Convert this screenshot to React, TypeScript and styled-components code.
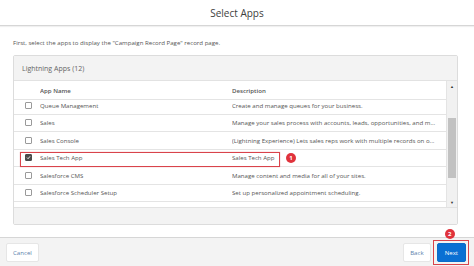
import React from 'react';
import styled, {createGlobalStyle} from 'styled-components';

const GlobalStyle = createGlobalStyle`
  html, body {
    margin: 0;
    padding: 0;
    background: #ffffff;
  }
  body {
    font-family: 'Open Sans', 'Liberation Sans', sans-serif;
    color: #3e3e3c;
  }
`;

type AppRow = {name: string; description: string; checked?: boolean; marked?: boolean};

const apps: AppRow[] = [
  {name: 'Queue Management', description: 'Create and manage queues for your business.'},
  {name: 'Sales', description: 'Manage your sales process with accounts, leads, opportunities, and m...'},
  {name: 'Sales Console', description: '(Lightning Experience) Lets sales reps work with multiple records on o...'},
  {name: 'Sales Tech App', description: 'Sales Tech App', checked: true, marked: true},
  {name: 'Salesforce CMS', description: 'Manage content and media for all of your sites.'},
  {name: 'Salesforce Scheduler Setup', description: 'Set up personalized appointment scheduling.'},
  {name: '', description: ''},
];

const App: React.FC = () => {
  return (
    <Modal>
      <GlobalStyle />
      <Header>
        <Title>Select Apps</Title>
      </Header>
      <Body>
        <Intro>First, select the apps to display the "Campaign Record Page" record page.</Intro>
        <Panel>
          <PanelHead>Lightning Apps (12)</PanelHead>
          <TableWrap>
            <TableArea>
              <HeadRow>
                <Cell />
                <HeadCell>App Name</HeadCell>
                <HeadCell>Description</HeadCell>
              </HeadRow>
              <Rows>
                <RowsInner>
                  {apps.map((app, i) => (
                    <Row key={i}>
                      <Cell>
                        <Checkbox $checked={app.checked}>
                          {app.checked && (
                            <svg width="5" height="5" viewBox="0 0 10 10">
                              <path d="M2 5.2 L4.2 7.4 L8.2 2.6" stroke="#fff" strokeWidth="1.8" fill="none" />
                            </svg>
                          )}
                        </Checkbox>
                      </Cell>
                      <Cell>{app.name}</Cell>
                      <Cell>{app.description}</Cell>
                      {app.marked && (
                        <>
                          <RowMark />
                          <Badge $left={272} $top={3}>1</Badge>
                        </>
                      )}
                    </Row>
                  ))}
                </RowsInner>
              </Rows>
            </TableArea>
            <ScrollBar>
              <Arrow>▲</Arrow>
              <Track>
                <Thumb />
              </Track>
              <Arrow>▼</Arrow>
            </ScrollBar>
          </TableWrap>
          <PanelFoot />
        </Panel>
      </Body>
      <Footer>
        <Button>Cancel</Button>
        <FooterRight>
          <Button>Back</Button>
          <NextWrap>
            <Button $brand>Next</Button>
            <NextMark />
            <Badge $left={8} $top={-14}>2</Badge>
          </NextWrap>
        </FooterRight>
      </Footer>
    </Modal>
  );
};

export default App;

const Modal = styled.div`
  width: 474px;
  height: 266px;
  display: flex;
  flex-direction: column;
  overflow: hidden;
  background: #ffffff;
`;

const Header = styled.div`
  height: 25px;
  flex: none;
  display: flex;
  align-items: center;
  justify-content: center;
  border-bottom: 1px solid #d6d6d6;
  box-shadow: 0 1px 1px rgba(0, 0, 0, 0.06);
`;

const Title = styled.div`
  font-size: 10px;
  color: #3e3e3c;
`;

const Body = styled.div`
  flex: 1;
  min-height: 0;
  display: flex;
  flex-direction: column;
  padding: 13px 16px 12px 13px;
`;

const Intro = styled.div`
  font-size: 6.1px;
  line-height: 8px;
  color: #555;
  margin-bottom: 8px;
`;

const Panel = styled.div`
  flex: 1;
  min-height: 0;
  display: flex;
  flex-direction: column;
  border: 1px solid #dcdcdc;
  border-radius: 2px;
  overflow: hidden;
`;

const PanelHead = styled.div`
  height: 24px;
  flex: none;
  display: flex;
  align-items: center;
  padding-left: 8px;
  font-size: 7px;
  color: #666;
  background: #f3f3f3;
  border-bottom: 1px solid #e2e2e2;
`;

const TableWrap = styled.div`
  flex: 1;
  display: flex;
  min-height: 0;
`;

const TableArea = styled.div`
  flex: 1;
  display: flex;
  flex-direction: column;
  min-width: 0;
  min-height: 0;
`;

const grid = `
  display: grid;
  grid-template-columns: 26px 192px 1fr;
  align-items: center;
  font-size: 6.1px;
  white-space: nowrap;
`;

const HeadRow = styled.div`
  ${grid};
  height: 18px;
  flex: none;
  font-weight: 600;
  color: #555;
  border-bottom: 1px solid #e4e4e4;
`;

const Cell = styled.div`
  display: flex;
  align-items: center;
  justify-content: flex-start;
  &:first-child {
    justify-content: flex-end;
    padding-right: 3px;
  }
  overflow: hidden;
`;

const HeadCell = styled(Cell)``;

const Rows = styled.div`
  flex: 1;
  min-height: 0;
  overflow: hidden;
`;

const RowsInner = styled.div`
  margin-top: -3px;
`;

const Row = styled.div`
  ${grid};
  position: relative;
  height: 17.5px;
  box-sizing: border-box;
  color: #555;
  border-bottom: 1px solid #e4e4e4;
`;

const Checkbox = styled.span<{$checked?: boolean}>`
  width: 5px;
  height: 5px;
  display: inline-flex;
  align-items: center;
  justify-content: center;
  border: 1px solid ${p => (p.$checked ? '#4a4a4a' : '#9a9a9a')};
  border-radius: 1px;
  background: ${p => (p.$checked ? '#4a4a4a' : '#fff')};
  margin-right: 5px;
`;

const RowMark = styled.div`
  position: absolute;
  left: 6px;
  top: 2px;
  width: 260px;
  height: 15px;
  box-sizing: border-box;
  border: 1.5px solid #d9434b;
  box-shadow: 0 0 1px rgba(217, 67, 75, 0.5);
  pointer-events: none;
`;

const Badge = styled.div<{$left: number; $top: number}>`
  position: absolute;
  left: ${p => p.$left}px;
  top: ${p => p.$top}px;
  width: 10px;
  height: 10px;
  border-radius: 50%;
  background: #e0333c;
  color: #fff;
  font-size: 6px;
  font-weight: 700;
  display: flex;
  align-items: center;
  justify-content: center;
`;

const ScrollBar = styled.div`
  width: 10px;
  flex: none;
  display: flex;
  flex-direction: column;
  background: #f1f1f1;
  border-left: 1px solid #e4e4e4;
`;

const Arrow = styled.div`
  height: 10px;
  flex: none;
  display: flex;
  align-items: center;
  justify-content: center;
  font-size: 4px;
  color: #333;
`;

const Track = styled.div`
  flex: 1;
  min-height: 0;
  padding-top: 27px;
`;

const Thumb = styled.div`
  height: 60px;
  margin: 0 1px;
  background: #c2c2c2;
`;

const PanelFoot = styled.div`
  height: 16px;
  flex: none;
  background: #f3f3f3;
  border-top: 1px solid #e2e2e2;
`;

const Footer = styled.div`
  height: 28px;
  flex: none;
  display: flex;
  align-items: center;
  justify-content: space-between;
  padding: 0 8px 0 6px;
  background: #f3f3f3;
  border-top: 1px solid #d6d6d6;
`;

const FooterRight = styled.div`
  display: flex;
  align-items: center;
  gap: 6px;
`;

const NextWrap = styled.div`
  position: relative;
  display: flex;
`;

const Button = styled.div<{$brand?: boolean}>`
  height: 17px;
  padding: 0 ${p => (p.$brand ? 7 : 6)}px;
  display: flex;
  align-items: center;
  font-size: 6.1px;
  border-radius: 2px;
  border: 1px solid ${p => (p.$brand ? '#0b6cc8' : '#e6e6e6')};
  background: ${p => (p.$brand ? '#0a70d3' : '#ffffff')};
  color: ${p => (p.$brand ? '#ffffff' : '#5b7fab')};
`;

const NextMark = styled.div`
  position: absolute;
  left: -4px;
  top: -3px;
  right: -3px;
  bottom: -3px;
  border: 1.5px solid #d9434b;
  pointer-events: none;
`;
